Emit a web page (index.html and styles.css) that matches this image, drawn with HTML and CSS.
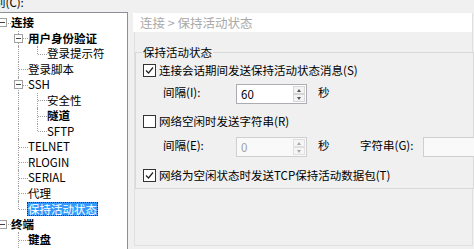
FILE: index.html
```html
<!DOCTYPE html>
<html>
<head>
<meta charset="utf-8">
<link rel="stylesheet" href="styles.css">
</head>
<body>
<div class="top-label">别(C):</div>
<div class="main">
  <div class="tree">
    <div class="row"><span class="cell c0"><i class="h"></i><span class="box"></span></span><span class="lbl b">连接</span></div>
    <div class="row"><span class="sp"></span><span class="cell c1"><i class="v"></i><i class="h"></i><span class="box"></span></span><span class="lbl b">用户身份验证</span></div>
    <div class="row"><span class="sp"></span><span class="cell p1"><i class="v"></i></span><span class="cell c2 last"><i class="v"></i><i class="h"></i></span><span class="lbl">登录提示符</span></div>
    <div class="row"><span class="sp"></span><span class="cell c1"><i class="v"></i><i class="h"></i></span><span class="lbl">登录脚本</span></div>
    <div class="row"><span class="sp"></span><span class="cell c1"><i class="v"></i><i class="h"></i><span class="box"></span></span><span class="lbl">SSH</span></div>
    <div class="row"><span class="sp"></span><span class="cell p1"><i class="v"></i></span><span class="cell c2"><i class="v"></i><i class="h"></i></span><span class="lbl">安全性</span></div>
    <div class="row"><span class="sp"></span><span class="cell p1"><i class="v"></i></span><span class="cell c2"><i class="v"></i><i class="h"></i></span><span class="lbl b">隧道</span></div>
    <div class="row"><span class="sp"></span><span class="cell p1"><i class="v"></i></span><span class="cell c2 last"><i class="v"></i><i class="h"></i></span><span class="lbl">SFTP</span></div>
    <div class="row"><span class="sp"></span><span class="cell c1"><i class="v"></i><i class="h"></i></span><span class="lbl">TELNET</span></div>
    <div class="row"><span class="sp"></span><span class="cell c1"><i class="v"></i><i class="h"></i></span><span class="lbl">RLOGIN</span></div>
    <div class="row"><span class="sp"></span><span class="cell c1"><i class="v"></i><i class="h"></i></span><span class="lbl">SERIAL</span></div>
    <div class="row"><span class="sp"></span><span class="cell c1"><i class="v"></i><i class="h"></i></span><span class="lbl">代理</span></div>
    <div class="row"><span class="sp"></span><span class="cell c1 last"><i class="v"></i><i class="h"></i></span><span class="lbl sel">保持活动状态</span></div>
    <div class="row"><span class="cell c0"><i class="h"></i><span class="box"></span></span><span class="lbl b">终端</span></div>
    <div class="row"><span class="sp"></span><span class="cell c1"><i class="v"></i><i class="h"></i></span><span class="lbl b">键盘</span></div>
  </div>

  <div class="content">
    <div class="crumb">连接 &gt; 保持活动状态</div>
    <fieldset class="group">
      <legend>保持活动状态</legend>
      <div class="opt first">
        <span class="chk"><svg viewBox="0 0 11 11" width="11" height="11"><polyline points="2,5.5 4.5,8 9,2.5" fill="none" stroke="#222" stroke-width="1.2"/></svg></span>
        <span>连接会话期间发送保持活动状态消息(S)</span>
      </div>
      <div class="field f1">
        <span class="flabel">间隔(I):</span>
        <div class="spin">
          <span class="val">60</span>
          <span class="btns"><span class="btn"><i class="up"></i></span><span class="btn"><i class="dn"></i></span></span>
        </div>
        <span class="unit">秒</span>
      </div>
      <div class="opt o2">
        <span class="chk"></span>
        <span>网络空闲时发送字符串(R)</span>
      </div>
      <div class="field f2">
        <span class="flabel">间隔(E):</span>
        <div class="spin dis">
          <span class="val">0</span>
          <span class="btns"><span class="btn"><i class="up"></i></span><span class="btn"><i class="dn"></i></span></span>
        </div>
        <span class="unit">秒</span>
        <span class="flabel2">字符串(G):</span>
        <span class="text dis"></span>
      </div>
      <div class="opt o3">
        <span class="chk"><svg viewBox="0 0 11 11" width="11" height="11"><polyline points="2,5.5 4.5,8 9,2.5" fill="none" stroke="#222" stroke-width="1.2"/></svg></span>
        <span>网络为空闲状态时发送TCP保持活动数据包(T)</span>
      </div>
    </fieldset>
  </div>
</div>
</body>
</html>
```

FILE: styles.css
```css
* { box-sizing: border-box; }
html, body { margin: 0; height: 100%; overflow: hidden; }
body {
  background: #f0f0f0;
  font-family: "Noto Sans CJK SC", "Noto Sans", sans-serif;
  font-size: 11.5px;
  color: #000;
}
.top-label {
  height: 17px;
  margin-top: -5px;
  margin-left: -6px;
  line-height: 15px;
  white-space: nowrap;
}
.main { display: flex; height: 237px; align-items: flex-start; }

/* tree */
.tree {
  width: 129px;
  height: 238px;
  margin-left: -1px;
  border: 1px solid #8c8f96;
  border-bottom: 0;
  background: #fff;
  padding-top: 2px;
  overflow: hidden;
  flex: none;
}
.row { display: flex; height: 15.5px; }
.sp { width: 11px; flex: none; }
.cell { display: grid; grid-template-rows: 1fr 1fr; flex: none; }
.c0 { width: 11px; grid-template-columns: 2px 1px 8px; }
.c1, .p1 { width: 17px; grid-template-columns: 7px 1px 9px; }
.c2 { width: 19px; grid-template-columns: 9px 1px 9px; }
.v { grid-column: 2; grid-row: 1 / 3; border-left: 1px dotted #a0a0a0; }
.last > .v { grid-row: 1; }
.h { grid-column: 3; grid-row: 2; border-top: 1px dotted #a0a0a0; }
.box {
  grid-column: 1 / 4;
  grid-row: 1 / 3;
  align-self: center;
  justify-self: start;
  width: 9px;
  height: 9px;
  border: 1px solid #a0a0a0;
  background: #fff;
  z-index: 1;
  display: flex;
  align-items: center;
  justify-content: center;
}
.box::after { content: ""; width: 5px; height: 1px; background: #444; }
.c0 .box { margin-left: -2px; }
.c1 .box { margin-left: 3px; }
.lbl {
  align-self: center;
  line-height: 13px;
  padding: 0 1px;
  margin-left: -1px;
  white-space: nowrap;
}
.b { font-weight: bold; }
.sel {
  background: #3399ff;
  color: #fff;
  outline: 1px dotted #0d3a6e;
  outline-offset: -1px;
  line-height: 14px;
}

/* right side */
.content {
  width: 339px;
  height: 233px;
  margin-left: 6px;
  margin-top: 1px;
  border: 1px solid #e0e0e0;
  border-top: 0;
  flex: none;
  display: flex;
  flex-direction: column;
}
.crumb {
  height: 19px;
  margin-left: -2px;
  background: #fff;
  color: #a9a9a9;
  font-size: 12.5px;
  line-height: 19px;
  padding-left: 7px;
  white-space: nowrap;
}
.group {
  margin: 14px -2px 0 0;
  border: 1px solid #d9d9d9;
  padding: 0 0 5px 7px;
  background: #f0f0f0;
  min-width: 0;
}
.group legend {
  padding: 0 1px;
  margin-left: -1px;
  line-height: 13px;
}
.opt { display: flex; align-items: center; height: 16px; white-space: nowrap; }
.opt.first { margin-top: 3px; }
.opt.o2 { margin-top: 9px; }
.opt.o3 { margin-top: 10px; }
.chk {
  width: 13px;
  height: 13px;
  border: 1px solid #333;
  background: #fff;
  margin-right: 3px;
  flex: none;
  display: flex;
}
.field { display: flex; align-items: flex-start; height: 20px; padding-left: 20px; white-space: nowrap; }
.f1 { margin-top: 6px; }
.f2 { margin-top: 8px; }
.flabel { width: 73px; line-height: 13px; margin-top: 1.5px; flex: none; }
.spin {
  width: 71px;
  height: 20px;
  border: 1px solid #abadb3;
  background: #fff;
  display: flex;
  flex: none;
}
.spin .val { flex: 1; padding-left: 4px; line-height: 18px; }
.btns { width: 13px; display: flex; flex-direction: column; padding: 1px 1px 1px 0; }
.btn {
  flex: 1;
  border: 1px solid #d6d6d6;
  background: #f3f3f3;
  display: flex;
  align-items: center;
  justify-content: center;
}
.up { width: 0; height: 0; border-left: 2.5px solid transparent; border-right: 2.5px solid transparent; border-bottom: 3px solid #555; }
.dn { width: 0; height: 0; border-left: 2.5px solid transparent; border-right: 2.5px solid transparent; border-top: 3px solid #555; }
.spin.dis { border-color: #cfcfcf; background: #f9f9f9; }
.spin.dis .val { color: #a0a0a0; }
.spin.dis .btn { border-color: #e0e0e0; background: #f5f5f5; }
.spin.dis .up { border-bottom-color: #a8a8a8; }
.spin.dis .dn { border-top-color: #a8a8a8; }
.unit { width: 42px; margin-left: 11px; line-height: 13px; margin-top: 1.5px; flex: none; }
.flabel2 { width: 63px; line-height: 13px; margin-top: 1.5px; flex: none; }
.text { flex: 1; min-width: 0; height: 20px; margin-right: -2px; }
.text.dis { border: 1px solid #cfcfcf; border-right: 0; background: #f9f9f9; }
```
